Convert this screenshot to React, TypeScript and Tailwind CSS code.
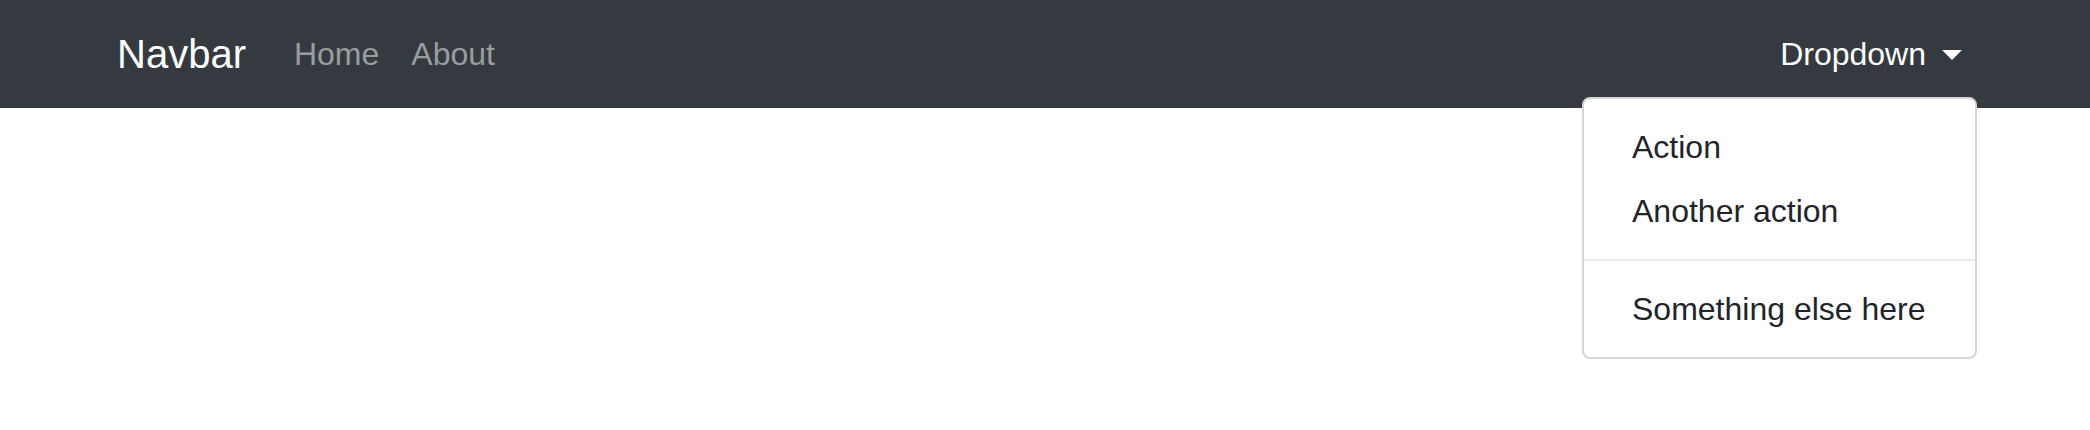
const App = () => {
  return (
    <div className="relative min-h-[430px] bg-white font-['Liberation_Sans',Arial,sans-serif]">
      <nav className="flex h-[108px] items-center bg-[#343a40] pb-[1px] pl-[117px] pr-[113px]">
        <a href="#" className="mr-[32px] text-[40px] leading-[60px] text-white">
          Navbar
        </a>
        <ul className="flex items-center">
          <li>
            <a href="#" className="block px-[16px] text-[32px] leading-[48px] text-[#9a9da0]">
              Home
            </a>
          </li>
          <li>
            <a href="#" className="block px-[16px] text-[32px] leading-[48px] text-[#9a9da0]">
              About
            </a>
          </li>
        </ul>
        <div className="ml-auto">
          <a href="#" className="flex items-center pl-[16px] pr-[15px] text-[32px] leading-[48px] text-white">
            Dropdown
            <span className="ml-[16px] mt-[2px] h-0 w-0 border-x-[10px] border-t-[10px] border-x-transparent border-t-white"></span>
          </a>
        </div>
      </nav>

      <div className="absolute right-[113px] top-[97px] w-[395px] rounded-[8px] border-2 border-[#d6d6d6] bg-white py-[16px]">
        <a href="#" className="block px-[48px] py-[8px] text-[32px] leading-[48px] text-[#212529]">
          Action
        </a>
        <a href="#" className="block px-[48px] py-[8px] text-[32px] leading-[48px] text-[#212529]">
          Another action
        </a>
        <div className="my-[16px] h-[2px] bg-[#e9ecef]"></div>
        <a href="#" className="block px-[48px] py-[8px] text-[32px] leading-[48px] text-[#212529]">
          Something else here
        </a>
      </div>
    </div>
  );
};

export default App;
